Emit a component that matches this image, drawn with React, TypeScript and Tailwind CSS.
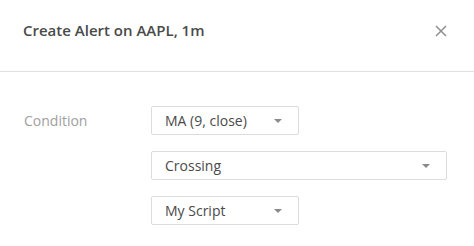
const Caret = () => (
  <svg width="8" height="4" viewBox="0 0 8 4" className="shrink-0">
    <path d="M0 0h8L4 4z" fill="#8a8a8a" />
  </svg>
);

const Select = ({ label, width }: { label: string; width: string }) => (
  <div
    className={`${width} h-[29px] flex items-center justify-between pl-[13px] pr-[16px] border border-[#dcdcdc] rounded-[2px] bg-white text-[14px] text-[#4a4a4a]`}
  >
    <span>{label}</span>
    <Caret />
  </div>
);

export default function App() {
  return (
    <div
      className="w-[474px] h-[246px] bg-white overflow-hidden"
      style={{ fontFamily: '"Open Sans", "Noto Sans", sans-serif' }}
    >
      <div className="h-[72px] flex items-center justify-between pl-[23px] pr-[27px] border-b border-[#e0e0e0]">
        <h1 className="text-[15px] font-semibold text-[#4a4a4a] mt-[-10px]">
          Create Alert on AAPL, 1m
        </h1>
        <svg width="12" height="12" viewBox="0 0 12 12" className="mt-[-10px]">
          <path d="M1 1l10 10M11 1L1 11" stroke="#8f8f8f" strokeWidth="1.5" />
        </svg>
      </div>
      <div className="flex pt-[34px] pl-[24px]">
        <div className="w-[127px] h-[29px] flex items-center text-[14px] text-[#a0a0a0]">
          Condition
        </div>
        <div className="flex flex-col gap-[16px]">
          <Select label="MA (9, close)" width="w-[148px]" />
          <Select label="Crossing" width="w-[296px]" />
          <Select label="My Script" width="w-[148px]" />
        </div>
      </div>
    </div>
  );
}
